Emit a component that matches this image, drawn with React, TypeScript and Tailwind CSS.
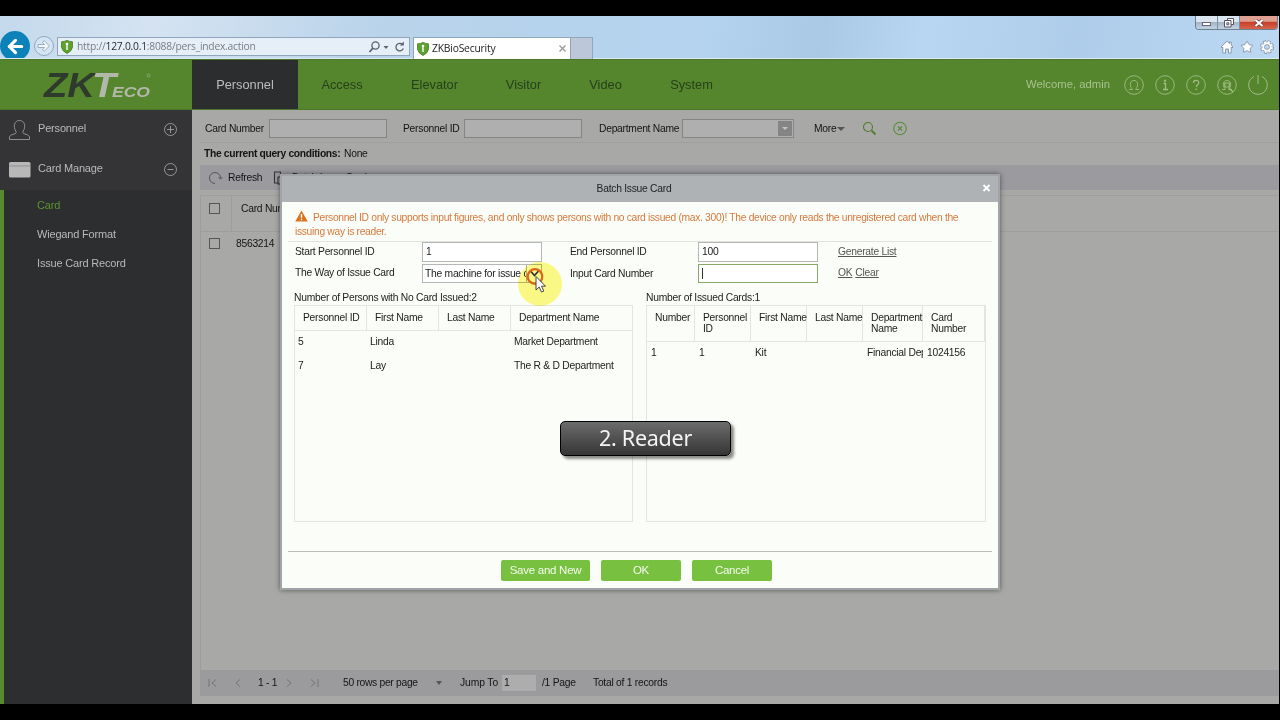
import type { ReactNode } from 'react';
import { ArrowLeft, Star } from 'lucide-react';

const tabs = [
  { label: 'Personnel', width: 'w-[106px]', active: true },
  { label: 'Access', width: 'w-[88px]' },
  { label: 'Elevator', width: 'w-[97px]' },
  { label: 'Visitor', width: 'w-[81px]' },
  { label: 'Video', width: 'w-[83px]' },
  { label: 'System', width: 'w-[89px]' },
];

const personColumns = [
  { label: 'Personnel ID', width: 'w-[72px]' },
  { label: 'First Name', width: 'w-[72px]' },
  { label: 'Last Name', width: 'w-[72px]' },
  { label: 'Department Name', width: 'w-[122px]' },
];

const persons = [
  ['5', 'Linda', '', 'Market Department'],
  ['7', 'Lay', '', 'The R & D Department'],
];

const cardColumns = [
  { label: 'Number', width: 'w-[48px]' },
  { label: 'Personnel\nID', width: 'w-[56px]' },
  { label: 'First Name', width: 'w-[56px]' },
  { label: 'Last Name', width: 'w-[56px]' },
  { label: 'Department\nName', width: 'w-[60px]' },
  { label: 'Card\nNumber', width: 'w-[62px]' },
];

const cards = [['1', '1', 'Kit', '', 'Financial Department', '1024156']];

const ShieldIcon = () => (
  <svg width="12" height="14" viewBox="0 0 12 14">
    <path d="M.5 1.8Q3.5 1.6 6 .4q2.500 1.200 5.500 1.400V7q-.5 4-5.500 6.500Q1 11 .5 7z" fill="#5fa12e" stroke="#447f1f" strokeWidth=".8" />
    <circle cx="6" cy="4" r="1.300" fill="#fff" />
    <path d="M5.300 5h1.400v5H5.300z" fill="#fff" />
  </svg>
);

const Browser = () => (
  <div className="flex h-[43px] border-b border-[#dcebf7] bg-[linear-gradient(100deg,#c3d9ec_0%,#d5e3f1_12%,#b9d3ea_30%,#b4d3ef_55%,#a9c9e5_64%,#b8d6f1_72%,#aecdea_84%,#bcd8f3_100%)]">
    <div className="flex flex-1">
      <div className="flex h-[42px] w-[57px] items-start overflow-hidden pt-[15px]">
        <div className="flex h-[30px] w-[30px] shrink-0 items-center justify-center rounded-full bg-[#0d82b8]">
          <ArrowLeft size={21} strokeWidth={3.6} className="text-white" />
        </div>
        <div className="mt-[5px] ml-1 flex h-5 w-5 items-center justify-center rounded-full border border-[#8fa8c0] bg-[#d6e5f3]">
          <svg width="14" height="12" viewBox="0 0 14 12" fill="#f4f8fc" stroke="#8ea6bf" strokeWidth=".9">
            <path d="M1 4.500h6.500L5.500 2.300 7.200.8 12.500 6l-5.300 5.200-1.700-1.500 2-2.200H1z" />
          </svg>
        </div>
      </div>
      <div className="mt-[21px] flex h-[19px] w-[353px] items-center border border-[#8fa6bc] bg-[#e6eef8] pl-[3px] font-['Open_Sans',sans-serif] text-[10.300px] tracking-[-0.240px] text-[#777e88]">
        <ShieldIcon />
        <span className="ml-1 flex-1 pt-px whitespace-nowrap">
          http://<span className="text-[#1e2530]">127.0.0.1</span>:8088/pers_index.action
        </span>
        <svg width="42" height="14" viewBox="0 0 42 14" fill="none" stroke="#56616e" strokeWidth="1.300">
          <circle cx="8.500" cy="5.500" r="3.600" />
          <path d="M6 8 2.500 12" strokeWidth="1.800" />
          <path d="m16.500 6h5l-2.500 3z" fill="#56616e" stroke="none" />
          <path d="M35.500 4.500a3.800 3.800 0 1 0 .8 4" />
          <path d="M36.800 1.500v4h-4z" fill="#56616e" stroke="none" />
        </svg>
      </div>
      <div className="mt-[21px] ml-[3px] flex h-[22px] w-[158px] items-center border border-b-0 border-[#8fa6bc] bg-white pr-1 pl-[3px] font-['Open_Sans',sans-serif] text-[10.300px] tracking-[-0.200px] text-[#222]">
        <ShieldIcon />
        <span className="ml-[3px] flex-1">ZKBioSecurity</span>
        <svg width="7" height="7" viewBox="0 0 7 7" stroke="#999" strokeWidth="1.400">
          <path d="m.5.5 6 6m0-6-6 6" />
        </svg>
      </div>
      <div className="mt-[21px] h-[22px] w-[22px] border border-b-0 border-l-0 border-[#8fa6bc] bg-[#bcc8d8]" />
    </div>
    <div className="flex flex-col items-end">
      <div className="mr-px flex h-[14px] w-[83px] overflow-hidden rounded-b border border-t-0 border-[#6d7f92]">
        <div className="flex w-[22px] items-center justify-center border-r border-[#7d8fa3] bg-[linear-gradient(#dbe5ef_45%,#a5b5c6_50%,#c3d3e2)]">
          <div className="mt-[3px] h-1 w-[9px] border border-[#667] bg-white" />
        </div>
        <div className="flex w-[22px] items-center justify-center border-r border-[#7d8fa3] bg-[linear-gradient(#dbe5ef_45%,#a5b5c6_50%,#c3d3e2)]">
          <svg width="10" height="10" viewBox="0 0 10 10" fill="#fff" stroke="#556" strokeWidth="1">
            <path d="M3.500.5h6v6h-6z" />
            <path d="M.5 2.500h6.500v6.500H.5zM2.800 4.800h2v2h-2z" />
          </svg>
        </div>
        <div className="flex flex-1 items-center justify-center bg-[linear-gradient(#e0a091_40%,#c8402a_50%,#d5654c)]">
          <svg width="10" height="8" viewBox="0 0 10 8">
            <path d="m1.500 1 7 6m0-6-7 6" stroke="#633" strokeWidth="3.400" />
            <path d="m1.500 1 7 6m0-6-7 6" stroke="#fff" strokeWidth="2.200" />
          </svg>
        </div>
      </div>
      <div className="mt-[10px] flex gap-[6px] pr-[5px]">
        <svg width="14" height="14" viewBox="0 0 14 14" fill="#fff" stroke="#8090a2" strokeWidth=".9">
          <path d="M1 7 7 1.200l2.500 2.400V2h1.700v3.300L13 7l-1 1-.8-.8V13H8.500V9h-3v4H2.800V7.200L2 8z" />
        </svg>
        <Star size={14} fill="#fff" strokeWidth={1.500} className="text-[#8090a2]" />
        <svg width="14" height="14" viewBox="0 0 14 14" fill="none">
          <circle cx="7" cy="7" r="5.200" stroke="#8090a2" strokeWidth="3.400" strokeDasharray="2.600 1.480" />
          <circle cx="7" cy="7" r="3.700" stroke="#8090a2" strokeWidth="3.200" />
          <circle cx="7" cy="7" r="5" stroke="#fff" strokeWidth="2" strokeDasharray="1.900 2.027" strokeDashoffset="-.3" />
          <circle cx="7" cy="7" r="3.700" stroke="#fff" strokeWidth="1.900" />
        </svg>
      </div>
    </div>
  </div>
);

const RoundIcon = ({ children }: { children: ReactNode }) => (
  <svg width="20" height="20" viewBox="0 0 20 20" fill="none" stroke="#a3bf86" strokeWidth=".9">
    <circle cx="10" cy="10" r="9.300" />
    {children}
  </svg>
);

const bust = 'M5 14.500h3.300c-.2-1.200-2-2.200-2-5C6.300 7 7.800 5.500 10 5.500s3.700 1.500 3.700 4c0 2.800-1.800 3.800-2 5H15';

const Header = () => (
  <header className="flex h-[50px] border-t border-[#4c7728] bg-[#55852d]">
    <div className="w-[192px] pt-[11px] pl-[42px]">
      <svg className="overflow-visible" width="112" height="30" viewBox="0 0 112 30" fontFamily="'Liberation Sans', sans-serif" fontWeight="bold" fontStyle="italic">
        <text x="2" y="26" fontSize="35" fill="#2e3a2b" textLength="51" lengthAdjust="spacingAndGlyphs">ZK</text>
        <text x="50" y="26" fontSize="35" fill="#b2b8aa" textLength="24" lengthAdjust="spacingAndGlyphs">T</text>
        <text x="70" y="26" fontSize="15.500" fill="#b2b8aa" textLength="38" lengthAdjust="spacingAndGlyphs">ECO</text>
        <circle cx="106.500" cy="4.500" r="1.500" fill="none" stroke="#9db589" strokeWidth=".7" />
      </svg>
    </div>
    <nav className="flex flex-1 text-[12.800px] text-[#26401b]">
      {tabs.map((tab) => (
        <div
          key={tab.label}
          className={`flex items-center justify-center ${tab.width} ${tab.active ? 'bg-[#2c2d2f] text-[#bdbdbd]' : ''}`}
        >
          {tab.label}
        </div>
      ))}
    </nav>
    <div className="flex items-center gap-[11px] pr-[11px] text-[11.300px] text-[#a9c290]">
      <span className="mr-[3px]">Welcome, admin</span>
      <RoundIcon><path d={bust} /></RoundIcon>
      <RoundIcon>
        <path d="M8.500 8.500h2v6M8 14.500h5" strokeWidth="1.300" />
        <circle cx="10" cy="5.800" r=".8" fill="#a3bf86" />
      </RoundIcon>
      <RoundIcon><path d="M7.500 8c0-3.500 5.300-3.500 5.300-.3 0 2-2.600 2-2.600 4.300m0 1.500v1.500" strokeWidth="1.200" /></RoundIcon>
      <RoundIcon>
        <path d={bust} />
        <path d="M7.800 8h4.500v4H7.800zM12 13l4 4" strokeWidth="1.200" />
      </RoundIcon>
      <svg width="20" height="20" viewBox="0 0 20 20" fill="none" stroke="#a3bf86">
        <path d="M6 1.600a9.300 9.300 0 1 0 8 0M10 0v9" />
      </svg>
    </div>
  </header>
);

const Toggle = ({ open }: { open?: boolean }) => (
  <svg width="14" height="14" viewBox="0 0 14 14" fill="none" stroke="#a0a0a0" strokeWidth=".9">
    <circle cx="7.500" cy="6.500" r="6" />
    <path d={open ? 'M4.500 6.500h6' : 'M4 6.500h7M7.500 3v7'} />
  </svg>
);

const Sidebar = () => (
  <aside className="flex w-[192px] flex-col bg-[#343436] text-[11px] tracking-[-0.180px] text-[#b9b9b9]">
    <div className="flex h-[40px] items-center pr-[15px] pl-2">
      <svg width="23" height="22" viewBox="0 0 23 22" fill="none" stroke="#909090">
        <path d="M1.500 20.500v-3q1-1.700 6-3 1.200-.8.300-2.500C5 8 6 1.500 11.500 1.500S18 8 15.200 12q-.9 1.700.3 2.500 5 1.300 6 3v3z" />
      </svg>
      <span className="ml-[7px] flex-1 pb-[3px]">Personnel</span>
      <Toggle />
    </div>
    <div className="flex h-[40px] items-center pr-[15px] pl-2">
      <svg width="23" height="16" viewBox="0 0 23 16">
        <rect x="1" width="21.500" height="15.500" rx="1.500" fill="#b8b8b8" />
        <path d="M1 4h21.500" stroke="#909090" />
      </svg>
      <span className="ml-[7px] flex-1 pb-[3px]">Card Manage</span>
      <Toggle open />
    </div>
    <div className="flex flex-1 flex-col border-l-4 border-[#588a2e] bg-[#2c2e2f] pt-px pl-[33px]">
      <span className="h-[29px] leading-[28px] text-[#5c9430]">Card</span>
      <span className="h-[29px] leading-[28px]">Wiegand Format</span>
      <span className="h-[29px] leading-[28px]">Issue Card Record</span>
    </div>
  </aside>
);

const Content = () => (
  <main className="flex flex-1 flex-col bg-[#a8a8a6] pt-px text-[10.300px] tracking-[-0.260px] text-[#141414]">
    <div className="ml-2 flex h-[32px] items-center border-b border-[#9f9f9d] pt-1 pl-[5px]">
      <span className="w-[64px] whitespace-nowrap">Card Number</span>
      <div className="h-[19px] w-[118px] border border-[#858585] bg-[#afafaf]" />
      <span className="ml-4 w-[61px] whitespace-nowrap">Personnel ID</span>
      <div className="h-[19px] w-[118px] border border-[#858585] bg-[#afafaf]" />
      <span className="ml-[17px] w-[83px] whitespace-nowrap">Department Name</span>
      <div className="flex h-[19px] w-[112px] justify-end border border-[#858585] bg-[#afafaf] p-px">
        <div className="flex w-[14px] items-center justify-center bg-[#858585]">
          <div className="border-x-[3px] border-t-[3px] border-x-transparent border-t-[#c4c4c4]" />
        </div>
      </div>
      <span className="ml-5 w-[23px]">More</span>
      <div className="border-x-4 border-t-4 border-x-transparent border-t-[#555]" />
      <svg className="ml-[17px]" width="15" height="15" viewBox="0 0 15 15" fill="none" stroke="#4e7f2a" strokeWidth="1.100">
        <circle cx="6" cy="6" r="4.500" />
        <path d="m9.500 9.500 4 4" strokeWidth="1.800" />
      </svg>
      <svg className="ml-[15px]" width="15" height="15" viewBox="0 0 15 15" fill="none" stroke="#5b8b3a" strokeWidth="1.100">
        <circle cx="8" cy="7.500" r="6.300" />
        <path d="m6 5.500 4 4m0-4-4 4" />
      </svg>
    </div>
    <div className="flex h-[22px] items-center pl-3">
      <b className="w-[140px] tracking-[-0.330px] whitespace-nowrap">The current query conditions:</b>
      <span>None</span>
    </div>
    <div className="ml-2 flex h-[25px] items-center bg-[#9b9b9f] pl-2">
      <svg width="15" height="14" viewBox="0 0 15 14" fill="none" stroke="#55555a">
        <path d="M7 12.500A5.500 5.500 0 1 1 12.500 7M10.500 6l2 2.200L14.500 6" />
      </svg>
      <span className="ml-[5px] w-[45px]">Refresh</span>
      <svg width="11" height="14" viewBox="0 0 11 14" fill="none" stroke="#333" strokeWidth="1.100">
        <path d="M7.500 4V1h-6v11H5M5 6h5v7H5z" />
      </svg>
      <span className="ml-2">Batch Issue Card</span>
    </div>
    <div className="mt-[5px] ml-2 flex-1 border-t border-l border-[#9d9d9b]">
      <div className="flex h-[36px] border-b border-[#9d9d9b]">
        <div className="w-[31px] border-r border-[#9d9d9b] pt-[7px] pl-2">
          <div className="h-[11px] w-[11px] border border-[#555]" />
        </div>
        <span className="pt-[5px] pl-[9px]">Card Number</span>
      </div>
      <div className="flex h-[23px] items-center">
        <div className="ml-2 h-[11px] w-[11px] border border-[#555]" />
        <span className="ml-4">8563214</span>
      </div>
    </div>
    <div className="mb-2 ml-2 flex h-[26px] items-center bg-[#9b9b9d] pb-px pl-2">
      <svg width="9" height="8" viewBox="0 0 9 8" fill="none" stroke="#747476"><path d="M1 0v8M8 .5 4 4l4 3.500" /></svg>
      <svg className="ml-[18px]" width="6" height="8" viewBox="0 0 6 8" fill="none" stroke="#747476"><path d="M5 .5 1 4l4 3.500" /></svg>
      <span className="ml-[17px] w-[28px]">1 - 1</span>
      <svg width="6" height="8" viewBox="0 0 6 8" fill="none" stroke="#747476"><path d="m1 .5 4 3.500-4 3.500" /></svg>
      <svg className="ml-[18px]" width="9" height="8" viewBox="0 0 9 8" fill="none" stroke="#747476"><path d="M8 0v8M1 .5 5 4 1 7.500" /></svg>
      <span className="ml-6 w-[93px] tracking-[-0.300px]">50 rows per page</span>
      <div className="border-x-[3px] border-t-4 border-x-transparent border-t-[#555]" />
      <span className="ml-[18px] w-[42px] tracking-[-0.100px]">Jump To</span>
      <div className="flex h-[16px] w-[34px] items-center bg-[#adadad] pl-[2px]">1</div>
      <span className="ml-[6px] w-[51px]">/1 Page</span>
      <span>Total of 1 records</span>
    </div>
  </main>
);

const Dialog = () => (
  <div className="absolute top-[174px] left-[280px] flex h-[416px] w-[720px] flex-col border-2 border-[#a0a4a8] bg-[#fbfef8] text-[10.300px] tracking-[-0.260px] text-[#222] shadow-[0_0_5px_rgba(0,0,0,0.5)]">
    <div className="flex h-[26px] shrink-0 items-center bg-[#aeb2b5] pr-[7px] pb-px pl-1">
      <span className="flex-1 text-center">Batch Issue Card</span>
      <svg width="9" height="9" viewBox="0 0 9 9" stroke="#fff" strokeWidth="1.900">
        <path d="m1.500 1 6 6m0-6-6 6" />
      </svg>
    </div>
    <div className="mx-[6px] flex h-[40px] shrink-0 border-b border-[#dfe3dc] pt-2 pl-[7px] leading-[14px] tracking-[-0.320px] text-[#d5793e]">
      <p>
        <svg className="mr-[5px] inline align-[-1px]" width="13" height="12" viewBox="0 0 13 12">
          <path d="M6.500.5 12.800 11.500H.2z" fill="#d9731d" />
          <path d="M6.500 4v3.700m0 1v1.500" stroke="#fff" strokeWidth="1.400" />
        </svg>
        Personnel ID only supports input figures, and only shows persons with no card issued (max. 300)! The device only reads the unregistered card when the
        <br />
        issuing way is reader.
      </p>
    </div>
    <div className="flex h-[20px] items-center pl-[13px]">
      <span className="w-[127px] pb-px">Start Personnel ID</span>
      <div className="flex h-5 w-[120px] items-center border border-[#b4b7b4] bg-white pl-[3px]">1</div>
      <span className="ml-7 w-[128px] pb-px">End Personnel ID</span>
      <div className="flex h-5 w-[120px] items-center border border-[#b4b7b4] bg-white pl-[3px]">100</div>
      <span className="ml-5 pb-px text-[#555] underline">Generate List</span>
    </div>
    <div className="flex h-[23px] items-center pl-[13px]">
      <span className="w-[127px] pb-px">The Way of Issue Card</span>
      <div className="flex h-[19px] w-[120px] items-center border border-[#b4b7b4] bg-white pl-[2px]">
        <span className="w-[101px] overflow-hidden whitespace-nowrap">The machine for issue card</span>
        <div className="h-full flex-1 border-l border-[#b4b7b4]" />
      </div>
      <span className="ml-7 w-[128px]">Input Card Number</span>
      <div className="flex h-[19px] w-[120px] items-center border border-[#8aa869] bg-white pl-[3px]">
        <div className="h-[11px] w-px bg-[#333]" />
      </div>
      <span className="ml-5 pb-px text-[#555] underline">OK</span>
      <span className="ml-[3px] pb-px text-[#555] underline">Clear</span>
    </div>
    <div className="flex gap-[13px] pt-[5px] pl-3">
      <div className="w-[339px]">
        <div className="h-[15px] leading-[16px] whitespace-nowrap">Number of Persons with No Card Issued:2</div>
        <div className="h-[217px] border border-[#e2e5e0]">
          <div className="flex h-[25px] border-b border-[#e2e5e0]">
            {personColumns.map((col) => (
              <div key={col.label} className={`shrink-0 border-r border-[#e2e5e0] pl-2 leading-[24px] whitespace-nowrap ${col.width}`}>
                {col.label}
              </div>
            ))}
          </div>
          {persons.map((row) => (
            <div key={row[0]} className="flex h-6 leading-[21px]">
              {row.map((cell, i) => (
                <div key={i} className={`shrink-0 pl-[3px] whitespace-nowrap ${personColumns[i].width}`}>{cell}</div>
              ))}
            </div>
          ))}
        </div>
      </div>
      <div className="w-[340px]">
        <div className="h-[15px] leading-[16px] whitespace-nowrap">Number of Issued Cards:1</div>
        <div className="h-[217px] border border-[#e2e5e0]">
          <div className="flex h-[36px] border-b border-[#e2e5e0]">
            {cardColumns.map((col) => (
              <div key={col.label} className={`shrink-0 border-r border-[#e2e5e0] pt-[7px] pl-2 leading-[10.500px] whitespace-pre ${col.width}`}>
                {col.label}
              </div>
            ))}
          </div>
          {cards.map((row) => (
            <div key={row[0]} className="flex h-[22px] leading-[21px]">
              {row.map((cell, i) => (
                <div key={i} className={`shrink-0 overflow-hidden pl-1 whitespace-nowrap ${cardColumns[i].width}`}>{cell}</div>
              ))}
            </div>
          ))}
        </div>
      </div>
    </div>
    <div className="mx-[6px] mt-[29px] flex gap-[11px] border-t border-[#b9bcb8] pt-2 pl-[213px] text-[11.500px] leading-[20px] text-[#f4faee]">
      <div className="h-[21px] w-[89px] rounded-[2px] bg-[#78c040] text-center">Save and New</div>
      <div className="h-[21px] w-[80px] rounded-[2px] bg-[#78c040] text-center">OK</div>
      <div className="h-[21px] w-[80px] rounded-[2px] bg-[#78c040] text-center">Cancel</div>
    </div>
  </div>
);

const App = () => (
  <div className="relative h-[720px] w-[1280px] overflow-hidden bg-black py-4 pr-px font-['Liberation_Sans',Arial,sans-serif]">
    <div className="flex h-[688px] flex-col">
      <Browser />
      <Header />
      <div className="flex flex-1 border-t border-[#4c7728]">
        <Sidebar />
        <Content />
      </div>
    </div>
    <Dialog />
    <div className="absolute top-[262px] left-[518px] h-[44px] w-[44px] rounded-full bg-[#fdf988] mix-blend-multiply" />
    <svg className="absolute top-[264px] left-[524px]" width="24" height="30" viewBox="0 0 24 30" fill="none">
      <path d="m6.500 7 4 4.500 4-4.500" stroke="#333" strokeWidth="1.800" />
      <circle cx="11" cy="12.500" r="7.300" stroke="#dc6818" strokeWidth="2.300" />
      <path d="M12 12.500v13.500l3.200-3 2.300 5 2.300-1-2.300-4.800H21.500z" fill="#fff" stroke="#444" strokeWidth="1" />
    </svg>
    <div className="absolute top-[421px] left-[560px] flex h-[35px] w-[171px] items-center justify-center rounded-[5px] border-[1.500px] border-black bg-linear-to-b from-[#6c6c6c] to-[#363636] font-['Noto_Sans',sans-serif] text-[21.500px] tracking-[-0.250px] text-[#f4f4f4] shadow-[3px_3px_3px_rgba(0,0,0,0.45)]">
      2. Reader
    </div>
  </div>
);

export default App;
